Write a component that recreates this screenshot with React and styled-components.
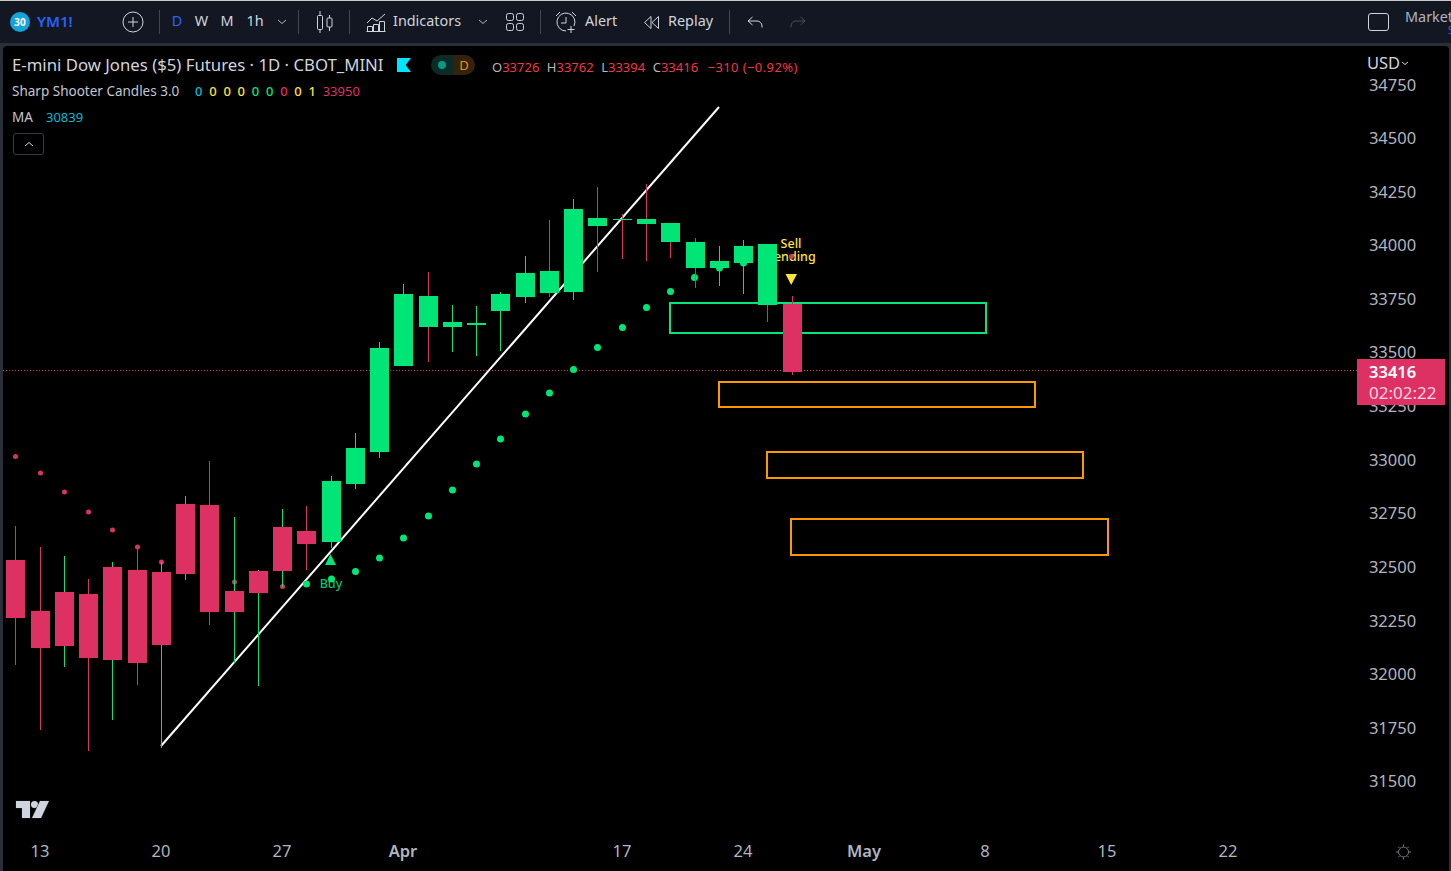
import React from 'react';
import styled, { createGlobalStyle } from 'styled-components';

const GREEN = '#00e676';
const PINK = '#de3163';
const ORANGE = '#ff9800';
const YELLOW = '#ffe23b';

// x, body top, body bottom, wick top, wick bottom, body colour, wick colour
const candles = [
  [15.5, 560, 618, 526, 665, PINK, PINK],
  [40.5, 611, 648, 547, 730, PINK, PINK],
  [64.5, 592, 646, 556, 667, PINK, GREEN],
  [88.5, 594, 658, 579, 751, PINK, PINK],
  [112.5, 567, 660, 562, 720, PINK, GREEN],
  [137.5, 570, 663, 547, 685, PINK, PINK],
  [161.5, 572, 645, 562, 748, PINK, GREEN],
  [185.5, 504, 574, 496, 580, PINK, GREEN],
  [209.5, 505, 612, 461, 625, PINK, PINK],
  [234.5, 591, 612, 517, 663, PINK, GREEN],
  [258.5, 571, 593, 570, 686, PINK, GREEN],
  [282.5, 527, 571, 509, 587, PINK, GREEN],
  [306.5, 531, 544, 506, 570, PINK, PINK],
  [331.5, 481, 542, 476, 548, GREEN, GREEN],
  [355.5, 448, 484, 433, 489, GREEN, GREEN],
  [379.5, 348, 452, 342, 458, GREEN, GREEN],
  [403.5, 294, 366, 284, 366, GREEN, GREEN],
  [428.5, 296, 327, 272, 362, GREEN, PINK],
  [452.5, 322, 327, 305, 352, GREEN, GREEN],
  [476.5, 323, 325, 306, 356, GREEN, GREEN],
  [500.5, 294, 311, 292, 351, GREEN, GREEN],
  [525.5, 273, 297, 256, 303, GREEN, GREEN],
  [549.5, 271, 293, 220, 297, GREEN, PINK],
  [573.5, 209, 292, 199, 300, GREEN, GREEN],
  [597.5, 218, 226, 187, 272, GREEN, PINK],
  [622.5, 219, 220, 214, 259, GREEN, PINK],
  [646.5, 219, 224, 184, 261, GREEN, PINK],
  [670.5, 223, 242, 223, 258, GREEN, PINK],
  [695.5, 242, 268, 238, 288, GREEN, PINK],
  [719.5, 261, 268, 246, 286, GREEN, GREEN],
  [743.5, 246, 263, 240, 294, GREEN, GREEN],
  [767.5, 244, 305, 244, 322, GREEN, PINK],
  [792.5, 304, 372, 296, 375, PINK, PINK],
];

const greenDots = [
  [306.5, 584], [331.5, 579], [355.5, 571.5], [379.5, 558], [403.5, 538], [428.5, 516],
  [452.5, 490], [476.5, 464], [500.5, 439], [525.5, 414], [549.5, 393], [573.5, 369.5],
  [597.5, 347.5], [622.5, 327.5], [646.5, 307.5], [670.5, 291.5], [694.5, 277.5],
  [719.5, 268], [743.5, 263],
];

const pinkDots = [
  [15.5, 456.5], [40.5, 473], [64.5, 492], [88.5, 512], [112.5, 530], [137.5, 547],
  [161.5, 562], [234.5, 582], [282.5, 586.5], [791.5, 256.5],
];

const boxes = [
  [670, 303, 316, 30, GREEN],
  [719, 382, 316, 25, ORANGE],
  [767, 452, 316, 26, ORANGE],
  [791, 519, 317, 36, ORANGE],
];

const prices = [
  [34750, 85], [34500, 138], [34250, 192], [34000, 245], [33750, 299], [33500, 352], [33250, 406],
  [33000, 460], [32750, 513], [32500, 567], [32250, 621], [32000, 674], [31750, 728], [31500, 781],
];

const times = [
  ['13', 40], ['20', 161], ['27', 282], ['Apr', 403, true], ['17', 622], ['24', 743],
  ['May', 864, true], ['8', 985], ['15', 1107], ['22', 1228],
];

const signals = [
  ['0', '#00bcd4'], ['0', YELLOW], ['0', YELLOW], ['0', YELLOW], ['0', GREEN],
  ['0', GREEN], ['0', PINK], ['0', YELLOW], ['1', YELLOW],
];

const ohlc = [
  ['O', '33726'], ['H', '33762'], ['L', '33394'], ['C', '33416'],
];

const GlobalStyle = createGlobalStyle`
  html, body {
    margin: 0;
    height: 100%;
    overflow: hidden;
    background: #2a2e39;
    font-family: "Noto Sans", "Open Sans", Arial, sans-serif;
  }
`;

const Page = styled.div`
  width: 1451px;
  height: 871px;
  display: flex;
  flex-direction: column;
  overflow: hidden;
`;

const Toolbar = styled.header`
  height: 42px;
  flex: none;
  display: flex;
  align-items: center;
  background: #131722;
  border-top: 1px solid #c9c9c9;
  color: #d1d4dc;
  font-size: 14.4px;
`;

const Tool = styled.div`
  width: ${(p) => p.$w}px;
  flex: none;
  height: 100%;
  box-sizing: border-box;
  padding-left: ${(p) => p.$pad || 0}px;
  display: flex;
  align-items: center;
  justify-content: ${(p) => (p.$pad ? 'flex-start' : 'center')};
  gap: ${(p) => p.$gap || 0}px;
  color: ${(p) => (p.$active ? '#2962ff' : '#d1d4dc')};
`;

const Label = styled.span`
  margin-top: -3px;
`;

const Badge = styled.span`
  width: 20px;
  height: 20px;
  border-radius: 50%;
  background: #16a3dc;
  color: #fff;
  font-size: 10px;
  font-weight: 700;
  display: flex;
  align-items: center;
  justify-content: center;
`;

const Symbol = styled.span`
  color: #2962ff;
  font-weight: 600;
  font-size: 15px;
  margin-top: -3px;
`;

const Divider = styled.span`
  width: 1px;
  height: 24px;
  flex: none;
  margin-left: ${(p) => p.$ml}px;
  background: #434651;
`;

const Spacer = styled.div`
  flex: 1;
`;

const Layout = styled.span`
  width: 19px;
  height: 16px;
  flex: none;
  margin-right: 16px;
  border: 1px solid #d1d4dc;
  border-radius: 3px;
`;

const Market = styled.div`
  width: 46px;
  flex: none;
  overflow: hidden;
  white-space: nowrap;
  font-size: 14.4px;
  line-height: 15px;
  color: #b2b5be;

  small {
    display: block;
    color: #2962ff;
    font-size: 11px;
    line-height: 11px;
    padding-left: 43px;
  }
`;

const Pane = styled.main`
  position: relative;
  flex: 1;
  margin: 3px 2px 0 3px;
  background: #000;
  border-radius: 4px 4px 0 0;
  overflow: hidden;
`;

const ChartSvg = styled.svg`
  display: block;
  width: 100%;
  height: 100%;
`;

const AxisText = styled.text`
  fill: #b2b5be;
  font-size: 16.5px;
  text-anchor: middle;
  font-weight: ${(p) => (p.$bold ? 600 : 400)};
`;

const TagText = styled.text`
  fill: ${(p) => (p.$dim ? '#fbd5e0' : '#fff')};
  font-size: ${(p) => (p.$dim ? 17 : 16.5)}px;
  font-weight: ${(p) => (p.$dim ? 400 : 600)};
`;

const SignalText = styled.text`
  font-size: 12.5px;
  font-weight: 500;
  text-anchor: middle;
  fill: ${(p) => p.$color};
`;

const Legend = styled.div`
  position: absolute;
  left: 9px;
  top: 0;
  display: flex;
  flex-direction: column;
  color: #b2b5be;
  font-size: 13px;
`;

const TitleRow = styled.div`
  height: 26px;
  padding-top: 6px;
  display: flex;
  align-items: center;
`;

const Title = styled.span`
  color: #d1d4dc;
  font-size: 16.75px;
  width: 385px;
  margin-top: -2px;
  white-space: nowrap;
`;

const Flag = styled.span`
  width: 14px;
  height: 14px;
  background: #00e5ff;
  clip-path: polygon(0 0, 100% 0, 62% 50%, 100% 100%, 0 100%);
`;

const Pill = styled.span`
  width: 44px;
  height: 20px;
  margin-left: 20px;
  border-radius: 10px;
  overflow: hidden;
  display: flex;
`;

const PillHalf = styled.span`
  flex: 1;
  display: flex;
  align-items: center;
  justify-content: center;
  background: ${(p) => p.$bg};
  color: #ff8a00;
  font-size: 13px;
`;

const Dot = styled.span`
  width: 8px;
  height: 8px;
  border-radius: 50%;
  background: #089981;
`;

const Ohlc = styled.div`
  margin-left: 17px;
  margin-top: 4px;
  display: flex;
  gap: 7.5px;
  color: #f23645;
  font-size: 13px;
  white-space: nowrap;

  b {
    color: #b2b5be;
    font-weight: 400;
  }
`;

const Change = styled.span`
  margin-left: 2px;
  letter-spacing: 0.4px;
`;

const StudyRow = styled.div`
  height: 26px;
  display: flex;
  align-items: center;
  white-space: nowrap;
  font-size: 13px;
`;

const StudyName = styled.span`
  width: ${(p) => p.$w}px;
  color: #c3c6ce;
  font-size: 13.5px;
`;

const Signal = styled.span`
  width: 14.2px;
  color: ${(p) => p.$color};
  font-weight: 500;
`;

const StudyValue = styled.span`
  color: ${(p) => p.$color};
`;

const Collapse = styled.button`
  width: 31px;
  height: 22px;
  margin: 3px 0 0 1px;
  padding: 0;
  background: #000;
  border: 1px solid #363a45;
  border-radius: 3px;
  color: #d1d4dc;
  display: flex;
  align-items: center;
  justify-content: center;
`;

const Icon = ({ w = 20, h = 20, children, color = '#d1d4dc' }) => (
  <svg width={w} height={h} viewBox={`0 0 ${w} ${h}`} fill="none" stroke={color} strokeWidth="1">
    {children}
  </svg>
);

const Chevron = () => (
  <Icon w={10} h={6} color="#b2b5be">
    <path d="M1 1l4 3.5L9 1" />
  </Icon>
);

const Chart = () => (
  <ChartSvg viewBox="3 46 1446 825">
    <line x1="3" y1="370.5" x2="1357" y2="370.5" stroke={PINK} strokeWidth="1" strokeDasharray="1 2" />
    {boxes.map(([x, y, w, h, color]) => (
      <rect key={x} x={x} y={y} width={w} height={h} fill="none" stroke={color} strokeWidth="2" />
    ))}
    <line x1="161" y1="746" x2="719" y2="107" stroke="#fff" strokeWidth="2" />
    <SignalText x="791" y="248" $color={YELLOW}>Sell</SignalText>
    <SignalText x="791" y="261" $color={YELLOW}>Pending</SignalText>
    <SignalText x="331" y="588" $color="#00c864">Buy</SignalText>
    {pinkDots.map(([x, y]) => <circle key={x} cx={x} cy={y} r="2.5" fill={PINK} />)}
    {greenDots.map(([x, y]) => <circle key={x} cx={x} cy={y} r="3.5" fill={GREEN} />)}
    <polygon points="785.5,274 797,274 791.2,285" fill={YELLOW} />
    <polygon points="325,565 336,565 330.5,554" fill={GREEN} />
    {candles.map(([x, top, bottom, wickTop, wickBottom, body, wick]) => (
      <g key={x}>
        <rect x={x - 0.5} y={wickTop} width="1" height={wickBottom - wickTop} fill={wick} />
        <rect x={x - 9.5} y={top} width="19" height={bottom - top} fill={body} />
      </g>
    ))}
    {prices.map(([price, y]) => (
      <AxisText key={price} x="1392.5" y={y + 6}>{price}</AxisText>
    ))}
    <rect x="1357" y="359" width="88" height="46" fill={PINK} />
    <TagText x="1369" y="378">33416</TagText>
    <TagText x="1369" y="399" $dim>02:02:22</TagText>
    <AxisText x="1383.5" y="69" style={{ fill: '#d1d4dc' }}>USD</AxisText>
    <path d="M1402 62l3 2.5 3-2.5" stroke="#d1d4dc" fill="none" />
    {times.map(([label, x, bold]) => (
      <AxisText key={label} x={x} y="857" $bold={bold}>{label}</AxisText>
    ))}
    <g fill="#d1d4dc" stroke="#1b1e26" strokeWidth="1" paintOrder="stroke">
      <path d="M16 801h14v17h-8v-10h-6z" />
      <circle cx="34.5" cy="804.5" r="3.5" />
      <polygon points="40,801 49,801 41,818 32,818" />
    </g>
    <g fill="none" stroke="#787b86" strokeWidth="1">
      <circle cx="1403.5" cy="852" r="5" />
      <path d="M1403.5 844.5v2M1403.5 857.5v2M1396 852h2M1409 852h2M1398.2 846.7l1.4 1.4M1407.4 855.9l1.4 1.4M1398.2 857.3l1.4-1.4M1407.4 848.1l1.4-1.4" />
    </g>
  </ChartSvg>
);

const App = () => (
  <Page>
    <GlobalStyle />
    <Toolbar>
      <Tool $w={114} $pad={10} $gap={7}>
        <Badge>30</Badge>
        <Symbol>YM1!</Symbol>
      </Tool>
      <Tool $w={38}>
        <Icon w={22} h={22}>
          <circle cx="11" cy="11" r="10" />
          <path d="M11 6v10M6 11h10" />
        </Icon>
      </Tool>
      <Divider $ml={7} />
      <Tool $w={5} />
      <Tool $w={24} $active><Label>D</Label></Tool>
      <Tool $w={25}><Label>W</Label></Tool>
      <Tool $w={26}><Label>M</Label></Tool>
      <Tool $w={30}><Label>1h</Label></Tool>
      <Tool $w={24}><Chevron /></Tool>
      <Divider $ml={4} />
      <Tool $w={50}>
        <Icon w={18} h={24}>
          <rect x="2.5" y="5.5" width="5" height="14" rx="1" />
          <path d="M5 1v4.5M5 19.5V23M14.5 5v3M14.5 17v4" />
          <rect x="12" y="8" width="5" height="9" rx="1" />
        </Icon>
      </Tool>
      <Divider $ml={0} />
      <Tool $w={120} $pad={16} $gap={7}>
        <Icon w={20} h={20}>
          <path d="M0.5 19.5h19M1.5 19.5v-5h5v5M7.5 19.5v-7h5v7M13.5 19.5v-10h5v10" />
          <path d="M1 11l5-5 5 3 8-7" />
        </Icon>
        <Label>Indicators</Label>
      </Tool>
      <Tool $w={25}><Chevron /></Tool>
      <Tool $w={40}>
        <Icon w={18} h={18}>
          <rect x="0.5" y="0.5" width="7" height="7" rx="2" />
          <rect x="10.5" y="0.5" width="7" height="7" rx="2" />
          <rect x="0.5" y="10.5" width="7" height="7" rx="2" />
          <rect x="10.5" y="10.5" width="7" height="7" rx="2" />
        </Icon>
      </Tool>
      <Divider $ml={5} />
      <Tool $w={89} $pad={14} $gap={8}>
        <Icon w={22} h={22}>
          <path d="M11 20a9 9 0 1 1 8-5" />
          <path d="M11 6v6H6M1 5l4-4M17 1l4 4M16 15v7M12.5 18.5h7" />
        </Icon>
        <Label>Alert</Label>
      </Tool>
      <Tool $w={95} $pad={13} $gap={8}>
        <Icon w={17} h={15}>
          <path d="M8 1.5L1.5 7.5 8 13.5zM15.5 1.5L9 7.5l6.5 6z" />
        </Icon>
        <Label>Replay</Label>
      </Tool>
      <Divider $ml={4} />
      <Tool $w={50}>
        <Icon w={16} h={12}>
          <path d="M5.5 1L1 5l4.5 4M1 5h9a5 5 0 0 1 5 5v1.5" />
        </Icon>
      </Tool>
      <Tool $w={35}>
        <Icon w={16} h={12} color="#4a4e59">
          <path d="M10.5 1L15 5l-4.5 4M15 5H6a5 5 0 0 0-5 5v1.5" />
        </Icon>
      </Tool>
      <Spacer />
      <Layout />
      <Market>
        Market
        <small>S</small>
      </Market>
    </Toolbar>
    <Pane>
      <Chart />
      <Legend>
        <TitleRow>
          <Title>E-mini Dow Jones ($5) Futures · 1D · CBOT_MINI</Title>
          <Flag />
          <Pill>
            <PillHalf $bg="#0c2b27"><Dot /></PillHalf>
            <PillHalf $bg="#33230e">D</PillHalf>
          </Pill>
          <Ohlc>
            {ohlc.map(([label, value]) => (
              <span key={label}><b>{label}</b>{value}</span>
            ))}
            <Change>−310 (−0.92%)</Change>
          </Ohlc>
        </TitleRow>
        <StudyRow>
          <StudyName $w={183}>Sharp Shooter Candles 3.0</StudyName>
          {signals.map(([value, color], i) => (
            <Signal key={i} $color={color}>{value}</Signal>
          ))}
          <StudyValue $color={PINK}>33950</StudyValue>
        </StudyRow>
        <StudyRow>
          <StudyName $w={34}>MA</StudyName>
          <StudyValue $color="#00bcd4">30839</StudyValue>
        </StudyRow>
        <Collapse>
          <Icon w={10} h={6}>
            <path d="M1 5l4-3.5L9 5" />
          </Icon>
        </Collapse>
      </Legend>
    </Pane>
  </Page>
);

export default App;
